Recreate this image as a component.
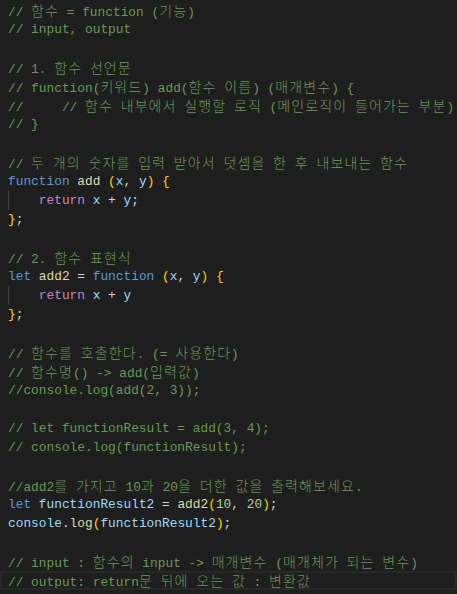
import React from "react";

const C = {
  cm: "#6a9955",
  kw: "#569cd6",
  ctl: "#c586c0",
  fn: "#dcdcaa",
  v: "#9cdcfe",
  p: "#d4d4d4",
  b: "#ffd700",
  n: "#b5cea8",
};

type Tok = [string, string];

const cm = (s: string): Tok[] => [[s, C.cm]];

const lines: Tok[][] = [
  cm("// 함수 = function (기능)"),
  cm("// input, output"),
  [],
  cm("// 1. 함수 선언문"),
  cm("// function(키워드) add(함수 이름) (매개변수) {"),
  cm("//     // 함수 내부에서 실행할 로직 (메인로직이 들어가는 부분)"),
  cm("// }"),
  [],
  cm("// 두 개의 숫자를 입력 받아서 덧셈을 한 후 내보내는 함수"),
  [
    ["function", C.kw],
    [" ", C.p],
    ["add", C.fn],
    [" ", C.p],
    ["(", C.b],
    ["x", C.v],
    [", ", C.p],
    ["y", C.v],
    [")", C.b],
    [" ", C.p],
    ["{", C.b],
  ],
  [
    ["    ", C.p],
    ["return", C.ctl],
    [" ", C.p],
    ["x", C.v],
    [" + ", C.p],
    ["y", C.v],
    [";", C.p],
  ],
  [
    ["}", C.b],
    [";", C.p],
  ],
  [],
  cm("// 2. 함수 표현식"),
  [
    ["let", C.kw],
    [" ", C.p],
    ["add2", C.fn],
    [" = ", C.p],
    ["function", C.kw],
    [" ", C.p],
    ["(", C.b],
    ["x", C.v],
    [", ", C.p],
    ["y", C.v],
    [")", C.b],
    [" ", C.p],
    ["{", C.b],
  ],
  [
    ["    ", C.p],
    ["return", C.ctl],
    [" ", C.p],
    ["x", C.v],
    [" + ", C.p],
    ["y", C.v],
  ],
  [
    ["}", C.b],
    [";", C.p],
  ],
  [],
  cm("// 함수를 호출한다. (= 사용한다)"),
  cm("// 함수명() -> add(입력값)"),
  cm("//console.log(add(2, 3));"),
  [],
  cm("// let functionResult = add(3, 4);"),
  cm("// console.log(functionResult);"),
  [],
  cm("//add2를 가지고 10과 20을 더한 값을 출력해보세요."),
  [
    ["let", C.kw],
    [" ", C.p],
    ["functionResult2", C.v],
    [" = ", C.p],
    ["add2", C.fn],
    ["(", C.b],
    ["10", C.n],
    [", ", C.p],
    ["20", C.n],
    [")", C.b],
    [";", C.p],
  ],
  [
    ["console", C.v],
    [".", C.p],
    ["log", C.fn],
    ["(", C.b],
    ["functionResult2", C.v],
    [")", C.b],
    [";", C.p],
  ],
  [],
  cm("// input : 함수의 input -> 매개변수 (매개체가 되는 변수)"),
  cm("// output: return문 뒤에 오는 값 : 변환값"),
];

const guideLines = new Set([10, 15]);
const currentLine = 30;

function splitRuns(text: string) {
  const out: { t: string; k: boolean }[] = [];
  const re = /[\uAC00-\uD7A3\u3131-\u318E]+/g;
  let last = 0;
  let m: RegExpExecArray | null;
  while ((m = re.exec(text))) {
    if (m.index > last) out.push({ t: text.slice(last, m.index), k: false });
    out.push({ t: m[0], k: true });
    last = m.index + m[0].length;
  }
  if (last < text.length) out.push({ t: text.slice(last), k: false });
  return out;
}

function Line({ toks, idx }: { toks: Tok[]; idx: number }) {
  const isCur = idx === currentLine;
  return (
    <div
      className={`relative h-[19px] leading-[19px] whitespace-pre pl-[8px] ${
        isCur ? "outline outline-2 -outline-offset-2 outline-[#282828]" : ""
      }`}
    >
      {guideLines.has(idx) && (
        <div className="absolute left-[8px] top-0 h-[19px] w-px bg-[#404040]" />
      )}
      {toks.map(([text, color], i) => (
        <span key={i} style={{ color }}>
          {splitRuns(text).map((r, j) =>
            r.k ? (
              <span
                key={j}
                className="text-[14px] tracking-[1.1px] font-['Noto_Sans_CJK_KR',sans-serif] font-light"
              >
                {r.t}
              </span>
            ) : (
              <span key={j}>{r.t}</span>
            )
          )}
        </span>
      ))}
    </div>
  );
}

export default function App() {
  return (
    <div className="w-[457px] h-[594px] overflow-hidden bg-[#1e1e1e] pt-[1px] font-['Liberation_Mono',monospace] text-[12.83px]">
      {lines.map((toks, i) => (
        <Line key={i} toks={toks} idx={i} />
      ))}
    </div>
  );
}
